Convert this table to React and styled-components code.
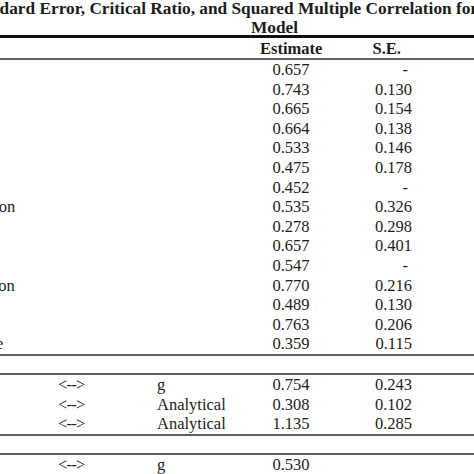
import React from "react";
import styled, { createGlobalStyle, css } from "styled-components";

const Global = createGlobalStyle`
    html, body {
        margin: 0;
        padding: 0;
        background: #ffffff;
        overflow: hidden;
    }
    body {
        font-family: "Liberation Serif", "Times New Roman", serif;
        font-size: 16.5px;
        color: #1c1c1c;
    }
`;

// the table is wider than the window: its left label column starts off screen
const Sheet = styled.div`
    margin-left: -86px;
    width: 700px;
`;

const Caption = styled.div`
    font-weight: bold;
    font-size: 17.3px;
    line-height: 17.5px;
    height: 35px;
`;

const CaptionLine = styled.div`
    white-space: nowrap;
    margin-left: ${(p) => p.$indent || 0}px;
    width: ${(p) => (p.$center ? "721px" : "auto")};
    text-align: ${(p) => (p.$center ? "center" : "left")};
    padding-top: ${(p) => (p.$center ? "1px" : "0")};
`;

const columns = css`
    display: grid;
    grid-template-columns: 142px 101px 103px 62px 90px 1fr;
`;

const HeadRow = styled.div`
    ${columns};
    border-top: 3px solid #111;
    border-bottom: 2px solid #5e5e5e;
    padding-top: 2px;
    line-height: 18px;
    height: 18px;
    font-weight: bold;
`;

const Section = styled.div`
    border-bottom: ${(p) => (p.$closed ? "2px solid #5e5e5e" : "none")};
`;

const SectionHead = styled.div`
    height: 17px;
    line-height: 17px;
    border-bottom: 2px solid #5e5e5e;
    padding-left: 2px;
    white-space: nowrap;
`;

const Row = styled.div`
    ${columns};
    line-height: 19.6px;
    height: 19.6px;
    white-space: nowrap;
`;

const Cell = styled.div`
    text-align: ${(p) => p.$align || "left"};
    padding-left: ${(p) => p.$pl || 0}px;
    padding-right: ${(p) => p.$pr || 0}px;
`;

const Arrow = styled(Cell)`
    letter-spacing: -0.8px;
`;

const loadings = [
    ["Vocabulary", "0.657", "-"],
    ["Similarities", "0.743", "0.130"],
    ["Information", "0.665", "0.154"],
    ["Analogies", "0.664", "0.138"],
    ["Word Use", "0.533", "0.146"],
    ["Riddles", "0.475", "0.178"],
    ["Matrices", "0.452", "-"],
    ["Verbal Lexicon", "0.535", "0.326"],
    ["Series", "0.278", "0.298"],
    ["Codes", "0.657", "0.401"],
    ["Patterns", "0.547", "-"],
    ["Approximation", "0.770", "0.216"],
    ["Shapes", "0.489", "0.130"],
    ["Puzzles", "0.763", "0.206"],
    ["Reading Rate", "0.359", "0.115"],
];

const covariances = [
    ["Verbal", "g", "0.754", "0.243"],
    ["Spatial", "Analytical", "0.308", "0.102"],
    ["Verbal", "Analytical", "1.135", "0.285"],
];

const correlations = [["Verbal", "g", "0.530", ""]];

function DataRow({ label, from, to, est, se }) {
    return (
        <Row>
            <Cell>{label}</Cell>
            <Arrow $pl={2}>{from}</Arrow>
            <Cell>{to}</Cell>
            <Cell $align="center">{est}</Cell>
            <Cell $align="right" $pr={se === "-" ? 4 : 0}>
                {se}
            </Cell>
            <Cell />
        </Row>
    );
}

export default function App() {
    return (
        <>
            <Global />
            <Sheet>
                <Caption>
                    <CaptionLine $indent={52}>
                        Standard Error, Critical Ratio, and Squared Multiple Correlation for the
                    </CaptionLine>
                    <CaptionLine $center>Model</CaptionLine>
                </Caption>

                <HeadRow>
                    <Cell />
                    <Cell />
                    <Cell />
                    <Cell $align="center" $pr={10}>
                        Estimate
                    </Cell>
                    <Cell $align="right" $pr={11}>
                        S.E.
                    </Cell>
                    <Cell />
                </HeadRow>

                <Section $closed>
                    {loadings.map(([label, est, se], i) => (
                        <DataRow key={i} label={label} est={est} se={se} />
                    ))}
                </Section>

                <SectionHead>Covariances</SectionHead>
                <Section $closed>
                    {covariances.map(([a, b, est, se], i) => (
                        <DataRow key={i} label={a} from="<-->" to={b} est={est} se={se} />
                    ))}
                </Section>

                <SectionHead>Correlations</SectionHead>
                <Section>
                    {correlations.map(([a, b, est, se], i) => (
                        <DataRow key={i} label={a} from="<-->" to={b} est={est} se={se} />
                    ))}
                </Section>
            </Sheet>
        </>
    );
}
